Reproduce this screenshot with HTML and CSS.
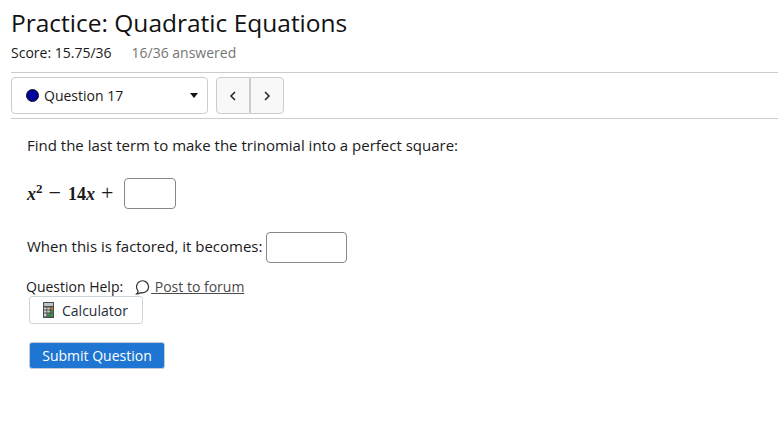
FILE: index.html
```html
<!DOCTYPE html>
<html lang="en">

<head>
    <meta charset="UTF-8">
    <title>Practice: Quadratic Equations</title>
    <link rel="stylesheet" href="styles.css">
</head>

<body>
    <div class="heading">
        <h1 class="title">Practice: Quadratic Equations</h1>
        <div class="score">
            <span>Score: 15.75/36</span>
            <span class="answered">16/36 answered</span>
        </div>
    </div>
    <div class="nav">
        <div class="select">
            <span class="dot"></span>
            <span class="select-label">Question 17</span>
            <span class="caret"></span>
        </div>
        <div class="pager">
            <button class="page-btn">
                <svg width="8" height="10" viewBox="0 0 8 10"><path d="M6 1 2 5l4 4" fill="none" stroke="#222" stroke-width="1.5"/></svg>
            </button>
            <button class="page-btn">
                <svg width="8" height="10" viewBox="0 0 8 10"><path d="M2 1l4 4-4 4" fill="none" stroke="#222" stroke-width="1.5"/></svg>
            </button>
        </div>
    </div>
    <main class="question">
        <p class="prompt">Find the last term to make the trinomial into a perfect square:</p>
        <div class="math-row">
            <span class="math"><i>x</i><sup>2</sup><span class="minus">&minus;</span>14<i>x</i><span class="plus">+</span></span>
            <input type="text" class="box box-small">
        </div>
        <div class="factor-row">
            <span class="factor-label">When this is factored, it becomes:</span>
            <input type="text" class="box box-large">
        </div>
        <div class="help">
            <span class="help-label">Question Help:</span>
            <span><a class="forum" href="#"><svg class="forum-icon" width="16" height="16" viewBox="0 0 16 16"><path d="M1.500 15C2.800 14 3.300 12.800 2.900 11.600A6 6 0 1 1 6.500 13.700C4.800 13.700 3.300 15 1.500 15Z" fill="none" stroke="#333" stroke-width="1.200"/></svg> Post to forum</a></span>
        </div>
        <button class="calc">
            <svg width="11" height="16" viewBox="0 0 11 16">
                <rect width="11" height="16" fill="#4d4d4d"/>
                <rect x="1" y="1" width="9" height="3" fill="#b8c4c8"/>
                <rect x="1" y="5.500" width="2.500" height="2" fill="#cfcfcf"/>
                <rect x="4.250" y="5.500" width="2.500" height="2" fill="#cfcfcf"/>
                <rect x="7.500" y="5.500" width="2.500" height="2" fill="#e07b2a"/>
                <rect x="1" y="8.500" width="2.500" height="2" fill="#cfcfcf"/>
                <rect x="4.250" y="8.500" width="2.500" height="2" fill="#cfcfcf"/>
                <rect x="7.500" y="8.500" width="2.500" height="2" fill="#3a9a4a"/>
                <rect x="1" y="11.500" width="2.500" height="3" fill="#cfcfcf"/>
                <rect x="4.250" y="11.500" width="2.500" height="3" fill="#3a9a4a"/>
                <rect x="7.500" y="11.500" width="2.500" height="3" fill="#3a9a4a"/>
            </svg>
            Calculator
        </button>
        <button class="submit">Submit Question</button>
    </main>
</body>

</html>
```

FILE: styles.css
```css
body {
    margin: 0;
    padding: 0;
    background: #fff;
    color: #1a1a1a;
    font-family: "Open Sans", sans-serif;
    font-size: 14px;
}

.heading {
    margin-left: 11px;
    padding-top: 6px;
}

.title {
    margin: 0;
    font-size: 24.5px;
    font-weight: 400;
    line-height: 33px;
    color: #111;
}

.score {
    display: flex;
    gap: 20px;
    margin-top: 4px;
    height: 20px;
    line-height: 20px;
}

.answered {
    color: #757575;
}

.nav {
    display: flex;
    gap: 8px;
    margin: 9px 0 0 11px;
    padding: 4px 0;
    border-top: 1px solid #ccc;
    border-bottom: 1px solid #ccc;
}

.select {
    display: flex;
    align-items: center;
    box-sizing: border-box;
    width: 197px;
    height: 37px;
    padding: 0 9px 0 14px;
    border: 1px solid #ccc;
    border-radius: 4px;
}

.dot {
    width: 13px;
    height: 13px;
    border-radius: 50%;
    background: #00009c;
    border: 1px solid #111;
    box-sizing: border-box;
    margin-right: 5px;
}

.select-label {
    flex: 1;
}

.caret {
    width: 0;
    height: 0;
    border-left: 4px solid transparent;
    border-right: 4px solid transparent;
    border-top: 5px solid #111;
}

.pager {
    display: flex;
}

.page-btn {
    display: flex;
    align-items: center;
    justify-content: center;
    width: 34px;
    height: 37px;
    padding: 0;
    background: #f8f8f8;
    border: 1px solid #ccc;
}

.page-btn:first-child {
    border-radius: 4px 0 0 4px;
}

.page-btn:last-child {
    border-radius: 0 4px 4px 0;
}

.question {
    padding: 16px 0 0 26px;
}

.prompt {
    margin: 0 0 0 1px;
    font-size: 15px;
    line-height: 20px;
}

.math-row {
    display: flex;
    align-items: center;
    gap: 11px;
    margin: 23px 0 0 1px;
}

.math {
    position: relative;
    top: 1px;
    font-family: "Liberation Serif", serif;
    font-weight: 700;
    font-size: 18px;
}

.math sup {
    font-size: 13px;
    line-height: 0;
}

.minus {
    margin: 0 7px 0 6px;
    font-size: 22px;
    line-height: 0;
    font-weight: 400;
}

.plus {
    margin-left: 6px;
    font-size: 22px;
    line-height: 0;
    font-weight: 400;
}

.box {
    box-sizing: border-box;
    padding: 0;
    background: #fff;
    border: 1px solid #888;
    border-radius: 4px;
}

.box-small {
    width: 52px;
    height: 31px;
}

.box-large {
    width: 81px;
    height: 31px;
}

.factor-row {
    display: flex;
    align-items: center;
    gap: 4px;
    margin: 23px 0 0 1px;
    font-size: 15px;
}

.factor-label {
    padding-bottom: 3px;
}

.help {
    display: flex;
    align-items: center;
    gap: 12px;
    margin-top: 13px;
    height: 20px;
}

.forum {
    color: #4a4a4a;
    text-decoration: underline;
}

.forum-icon {
    vertical-align: -3px;
}

.calc {
    display: flex;
    align-items: center;
    gap: 8px;
    box-sizing: border-box;
    width: 114px;
    height: 28px;
    margin: 0 0 0 3px;
    padding: 0 0 0 13px;
    background: #fff;
    border: 1px solid #ccd5dc;
    border-radius: 3px;
    color: #1f2d3d;
    font-family: inherit;
    font-size: 14px;
}

.submit {
    display: block;
    box-sizing: border-box;
    width: 136px;
    height: 27px;
    margin: 18px 0 0 3px;
    padding: 0;
    background: #1e76d2;
    border: 1px solid #c3ccd6;
    border-radius: 3px;
    color: #fff;
    font-family: inherit;
    font-size: 14px;
}
```
